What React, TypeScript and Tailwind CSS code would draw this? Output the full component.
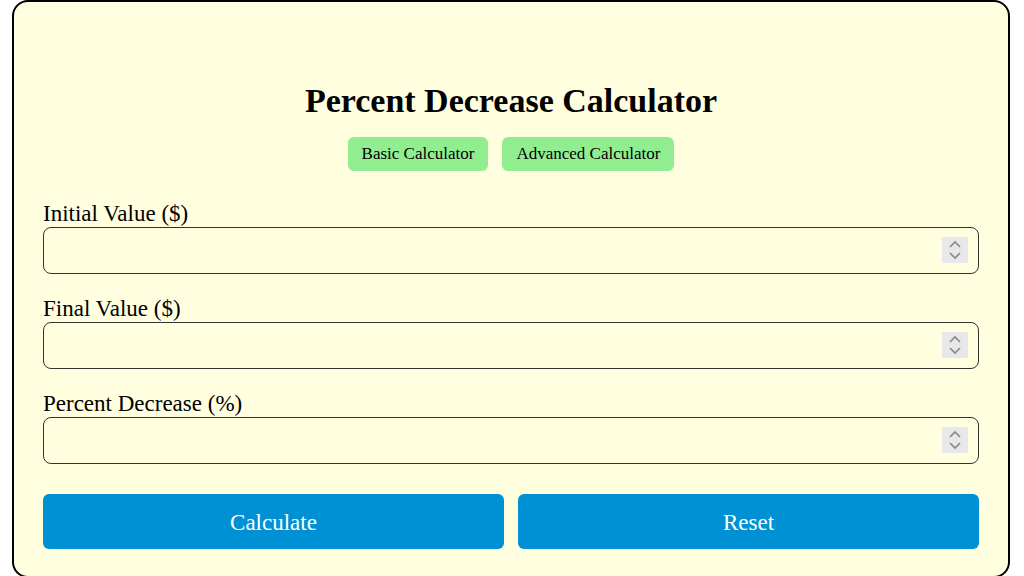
import { useState } from 'react';

const fields = [
  { key: 'initial', label: 'Initial Value ($)' },
  { key: 'final', label: 'Final Value ($)' },
  { key: 'percent', label: 'Percent Decrease (%)' },
];

export default function App() {
  const [vals, setVals] = useState<Record<string, string>>({ initial: '', final: '', percent: '' });

  const calculate = () => {
    const a = parseFloat(vals.initial);
    const b = parseFloat(vals.final);
    const p = parseFloat(vals.percent);
    if (!isNaN(a) && !isNaN(b) && a !== 0) setVals(v => ({ ...v, percent: (((a - b) / a) * 100).toFixed(2) }));
    else if (!isNaN(a) && !isNaN(p)) setVals(v => ({ ...v, final: (a * (1 - p / 100)).toFixed(2) }));
    else if (!isNaN(b) && !isNaN(p) && p !== 100) setVals(v => ({ ...v, initial: (b / (1 - p / 100)).toFixed(2) }));
  };

  return (
    <div className="min-h-screen bg-white" style={{ fontFamily: '"Liberation Serif", "Times New Roman", serif' }}>
      <div className="ml-[12px] w-[998px] h-[578px] bg-[#ffffe0] border-2 border-black rounded-[16px] px-[29px] pt-[80px]">
        <h1 className="text-center text-[34px] leading-[38px] font-bold text-black">Percent Decrease Calculator</h1>
        <div className="flex justify-center gap-[14px] mt-[17px]">
          <button type="button" className="h-[34px] px-[14px] rounded-[6px] bg-[#90ee90] text-[17px] text-black">Basic Calculator</button>
          <button type="button" className="h-[34px] px-[14px] rounded-[6px] bg-[#90ee90] text-[17px] text-black">Advanced Calculator</button>
        </div>
        <div className="mt-[31px] flex flex-col gap-[23px]">
          {fields.map(f => (
            <div key={f.key}>
              <label className="block text-[23px] leading-[23px] text-black mb-[2px]">{f.label}</label>
              <div className="relative">
                <input
                  type="number"
                  value={vals[f.key]}
                  onChange={e => setVals(v => ({ ...v, [f.key]: e.target.value }))}
                  className="w-full h-[47px] border border-[#333] rounded-[8px] bg-transparent px-3 text-[18px] outline-none [appearance:textfield] [&::-webkit-inner-spin-button]:appearance-none"
                />
                {/* spinner as drawn in the shot */}
                <div className="absolute right-[11px] top-[10px] w-[26px] h-[26px] bg-[#e8e8ea] flex flex-col items-center justify-center pointer-events-none">
                  <svg width="14" height="22" viewBox="0 0 14 22" fill="none" stroke="#8a8a8a" strokeWidth="1.7">
                    <path d="M2 8 L7 3 L12 8" />
                    <path d="M2 14 L7 19 L12 14" />
                  </svg>
                </div>
              </div>
            </div>
          ))}
        </div>
        <div className="mt-[30px] flex gap-[14px]">
          <button type="button" onClick={calculate} className="flex-1 h-[55px] pt-[3px] rounded-[6px] bg-[#0091d5] text-white text-[23px]">Calculate</button>
          <button type="button" onClick={() => setVals({ initial: '', final: '', percent: '' })} className="flex-1 h-[55px] pt-[3px] rounded-[6px] bg-[#0091d5] text-white text-[23px]">Reset</button>
        </div>
      </div>
    </div>
  );
}
